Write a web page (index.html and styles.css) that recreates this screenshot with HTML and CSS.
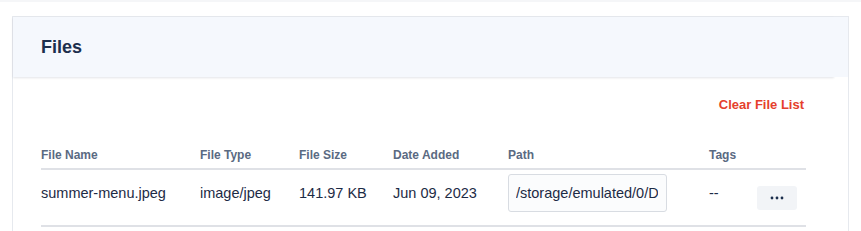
FILE: index.html
```html
<!DOCTYPE html>
<html lang="en">
<head>
    <meta charset="UTF-8">
    <meta name="viewport" content="width=device-width, initial-scale=1.0">
    <title>Files</title>
    <link rel="stylesheet" href="styles.css">
</head>
<body>
    <div class="top-strip"></div>
    <div class="card">
        <div class="card-header">
            <h2>Files</h2>
        </div>
        <div class="card-body">
            <div class="actions">
                <button class="clear-btn">Clear File List</button>
            </div>
            <table class="files">
                <thead>
                    <tr>
                        <th class="col-name">File Name</th>
                        <th class="col-type">File Type</th>
                        <th class="col-size">File Size</th>
                        <th class="col-date">Date Added</th>
                        <th class="col-path">Path</th>
                        <th class="col-tags">Tags</th>
                        <th class="col-more"></th>
                    </tr>
                </thead>
                <tbody>
                    <tr>
                        <td>summer-menu.jpeg</td>
                        <td>image/jpeg</td>
                        <td>141.97 KB</td>
                        <td>Jun 09, 2023</td>
                        <td><input class="path-input" type="text" value="/storage/emulated/0/DCIM/summer-menu.jpeg" readonly></td>
                        <td>--</td>
                        <td>
                            <button class="more-btn">
                                <svg width="14" height="4" viewBox="0 0 14 4">
                                    <circle cx="2" cy="2" r="1.4" fill="#1c2f4d"/>
                                    <circle cx="7" cy="2" r="1.4" fill="#1c2f4d"/>
                                    <circle cx="12" cy="2" r="1.4" fill="#1c2f4d"/>
                                </svg>
                            </button>
                        </td>
                    </tr>
                </tbody>
            </table>
        </div>
    </div>
</body>
</html>
```

FILE: styles.css
```css
body {
    margin: 0;
    background-color: #ffffff;
    font-family: "Liberation Sans", Arial, sans-serif;
    color: #1d2b45;
}
.top-strip {
    height: 2px;
    background-color: #f5f6f8;
}
.card {
    margin: 14px 12px 0 12px;
    border: 1px solid #e6e9ee;
    border-bottom: none;
    height: 240px;
}
.card-header {
    background-color: #f5f8fd;
    height: 60px;
    padding: 0 28px;
    display: flex;
    align-items: center;
    box-shadow: 0 1px 2px rgba(30, 45, 70, 0.12);
    margin-right: 14px;
    position: relative;
}
.card-header::after {
    content: "";
    position: absolute;
    top: 0;
    right: -14px;
    width: 14px;
    height: 60px;
    background-color: #f5f8fd;
}
.card-header h2 {
    margin: 0;
    font-size: 18px;
    font-weight: 600;
    color: #1c2f4d;
}
.card-body {
    padding: 20px 44px 0 28px;
}
.actions {
    display: flex;
    justify-content: flex-end;
    margin-bottom: 36px;
}
.clear-btn {
    border: none;
    background: none;
    padding: 0;
    font-family: inherit;
    font-size: 13px;
    font-weight: 600;
    color: #e5402c;
    cursor: pointer;
}
.files {
    width: 765px;
    border-collapse: collapse;
    table-layout: fixed;
}
.files th {
    text-align: left;
    font-size: 12px;
    font-weight: 600;
    color: #5a6a82;
    padding: 0 0 6px 0;
    border-bottom: 2px solid #dfe1e6;
}
.files td {
    font-size: 14.5px;
    color: #1d2b45;
    padding: 4px 0 13px 0;
    border-bottom: 2px solid #dfe1e6;
    white-space: nowrap;
}
.col-name { width: 159px; }
.col-type { width: 99px; }
.col-size { width: 94px; }
.col-date { width: 115px; }
.col-path { width: 201px; }
.col-tags { width: 48px; }
.col-more { width: 49px; }
.path-input {
    box-sizing: border-box;
    width: 159px;
    height: 38px;
    padding: 0 8px 0 7px;
    border: 1px solid #d8dce2;
    border-radius: 3px;
    background-color: #fbfcfd;
    font-family: inherit;
    font-size: 14.5px;
    color: #1d2b45;
    outline: none;
}
.more-btn {
    width: 40px;
    height: 24px;
    margin-top: 9px;
    border: none;
    border-radius: 3px;
    background-color: #f2f4f7;
    padding: 0;
    display: flex;
    align-items: center;
    justify-content: center;
    cursor: pointer;
}
```
